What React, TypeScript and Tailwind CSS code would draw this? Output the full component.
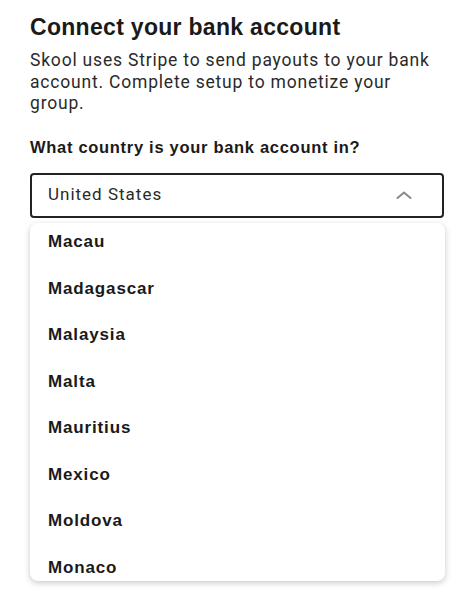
import React from 'react';

const countries = ['Macau', 'Madagascar', 'Malaysia', 'Malta', 'Mauritius', 'Mexico', 'Moldova', 'Monaco'];

export default function App() {
  return (
    <main className="w-[474px] h-[606px] bg-white overflow-hidden px-[30px] pt-[12px] text-[#1a1a1a]">
      <h1 className="font-['Liberation_Sans',Arial,sans-serif] font-bold text-[23px] leading-[30px] tracking-[0.3px]">
        Connect your bank account
      </h1>
      <p className="mt-[8px] font-['Roboto',sans-serif] text-[17.5px] leading-[21.5px] tracking-[0.8px] text-[#2a2a2a] pr-[6px]">
        Skool uses Stripe to send payouts to your bank account. Complete setup to monetize your group.
      </p>
      <label className="block mt-[22px] font-['Liberation_Sans',Arial,sans-serif] font-bold text-[16.5px] leading-[20px] tracking-[0.7px]">
        What country is your bank account in?
      </label>

      <div className="relative mt-[16px]">
        <div className="flex items-center justify-between h-[45px] w-[414px] border-2 border-[#222] rounded-[4px] pl-[16px] pr-[30px]">
          <span className="font-['Roboto',sans-serif] text-[17px] tracking-[1px] text-[#2a2a2a]">United States</span>
          <svg width="16" height="8" viewBox="0 0 16 8" fill="none">
            <path d="M1.5 7L8 1.5L14.5 7" stroke="#8a8a8a" strokeWidth="2" strokeLinecap="round" strokeLinejoin="round" />
          </svg>
        </div>

        <ul className="mt-[5px] w-[415px] h-[358px] overflow-hidden rounded-[8px] bg-white shadow-[0_2px_6px_rgba(0,0,0,0.22)]">
          {countries.map((c) => (
            <li
              key={c}
              className="h-[46.5px] flex items-center pl-[18px] font-['Liberation_Sans',Arial,sans-serif] font-bold text-[17px] tracking-[0.85px] text-[#1a1a1a] first:-mt-[4px]"
            >
              {c}
            </li>
          ))}
        </ul>
      </div>
    </main>
  );
}
